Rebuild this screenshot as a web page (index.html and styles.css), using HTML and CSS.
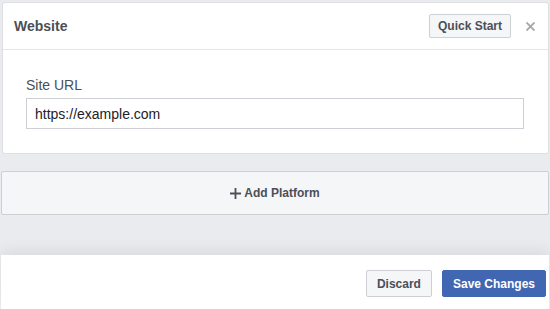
FILE: index.html
```html
<!DOCTYPE html>
<html lang="en">
<head>
	<meta charset="UTF-8">
	<title>Website</title>
	<link rel="stylesheet" href="styles.css">
</head>
<body>
	<div class="page">
		<div class="platform-card">
			<div class="card-header">
				<span class="card-title">Website</span>
				<a href="javascript:void(0);" class="btn btn-gray">Quick Start</a>
				<a href="javascript:void(0);" class="close-btn">
					<svg width="9" height="9" viewBox="0 0 9 9"><path d="M0.5 0.5L8.5 8.5M8.5 0.5L0.5 8.5" stroke="#a3a6ab" stroke-width="1.8" fill="none"/></svg>
				</a>
			</div>
			<div class="card-body">
				<label class="field-label">Site URL</label>
				<input type="text" class="field-input" value="https://example.com">
			</div>
		</div>

		<a href="javascript:void(0);" class="add-platform">
			<svg width="11" height="11" viewBox="0 0 11 11"><path d="M5.5 0V11M0 5.5H11" stroke="#4b4f56" stroke-width="1.8" fill="none"/></svg>
			Add Platform
		</a>

		<!-- 底部按钮 -->
		<div class="footer">
			<a href="javascript:void(0);" class="btn btn-gray btn-lg">Discard</a>
			<a href="javascript:void(0);" class="btn btn-blue btn-lg">Save Changes</a>
		</div>
	</div>
</body>
</html>
```

FILE: styles.css
```css
html, body {
	margin: 0;
	padding: 0;
}
body {
	background-color: #e9ebee;
	font-family: "Liberation Sans", Arial, sans-serif;
	color: #4b4f56;
}
a {
	text-decoration: none;
}
.page {
	height: 309px;
	display: flex;
	flex-direction: column;
	overflow: hidden;
}
.platform-card {
	margin: 2px 1px 0 2px;
	background-color: #fff;
	border: 1px solid #dddfe2;
	border-radius: 3px;
}
.card-header {
	height: 46px;
	border-bottom: 1px solid #e5e6e9;
	display: flex;
	align-items: center;
	padding: 0 13px 0 11px;
}
.card-title {
	flex: 1;
	font-size: 14px;
	font-weight: bold;
	color: #4b4f56;
}
.btn {
	display: inline-flex;
	align-items: center;
	justify-content: center;
	box-sizing: border-box;
	font-size: 12px;
	font-weight: bold;
	border: 1px solid #ccd0d5;
	border-radius: 2px;
	height: 24px;
	padding: 0 8px;
}
.btn-gray {
	background-color: #f5f6f7;
	color: #4b4f56;
}
.btn-blue {
	background-color: #4267b2;
	border-color: #4267b2;
	color: #fff;
}
.btn-lg {
	height: 27px;
	padding: 0 10px;
}
.close-btn {
	display: flex;
	margin-left: 15px;
	margin-top: 1px;
}
.card-body {
	padding: 26px 24px 24px 23px;
}
.field-label {
	display: block;
	font-size: 14px;
	line-height: 18px;
	color: #4b4f56;
	margin-bottom: 4px;
}
.field-input {
	display: block;
	box-sizing: border-box;
	width: 100%;
	height: 31px;
	margin: 0;
	border: 1px solid #ccd0d5;
	border-radius: 0;
	padding: 0 8px;
	font-family: "Liberation Sans", Arial, sans-serif;
	font-size: 14px;
	color: #1d2129;
	outline: none;
}
.add-platform {
	margin: 17px 1px 0 1px;
	height: 42px;
	background-color: #f5f6f7;
	border: 1px solid #ccd0d5;
	border-radius: 2px;
	display: flex;
	align-items: center;
	justify-content: center;
	gap: 3px;
	font-size: 12px;
	font-weight: bold;
	color: #4b4f56;
}
.footer {
	margin: auto 1px 0 1px;
	background-color: #fff;
	box-shadow: 0 -6px 12px rgba(0, 0, 0, 0.06);
	display: flex;
	justify-content: flex-end;
	gap: 10px;
	padding: 15px 3px 12px 0;
}
```
